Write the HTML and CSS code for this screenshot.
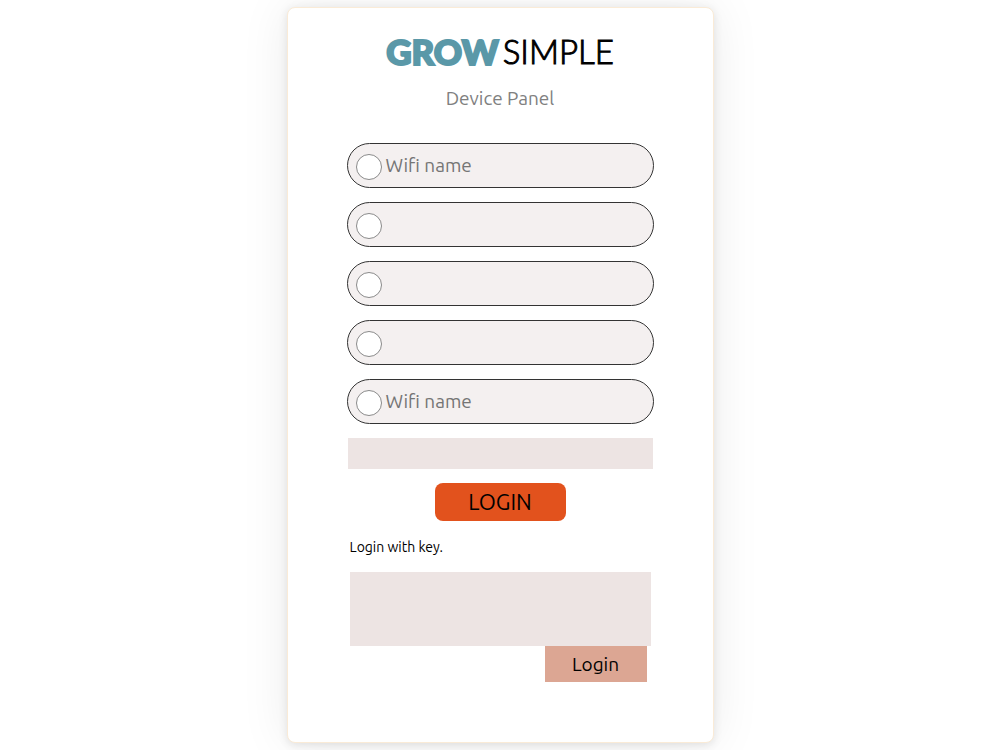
FILE: index.html
```html
<!DOCTYPE html>
<html lang="en">
<head>
    <meta charset="UTF-8">
    <meta name="viewport" content="width=device-width, initial-scale=1.0">
    <title>Grow Simple Device Panel</title>
    <link rel="stylesheet" href="styles.css">
</head>
<body>
    <main class="card">
        <h1 class="logo"><span class="logo-grow">GROW</span><span class="logo-simple">SIMPLE</span></h1>
        <p class="subtitle">Device Panel</p>

        <form class="wifi-form">
            <label class="wifi-row">
                <input type="radio" name="wifi" value="1">
                <span>Wifi name</span>
            </label>
            <label class="wifi-row">
                <input type="radio" name="wifi" value="2" aria-label="Wifi 2">
            </label>
            <label class="wifi-row">
                <input type="radio" name="wifi" value="3" aria-label="Wifi 3">
            </label>
            <label class="wifi-row">
                <input type="radio" name="wifi" value="4" aria-label="Wifi 4">
            </label>
            <label class="wifi-row">
                <input type="radio" name="wifi" value="5">
                <span>Wifi name</span>
            </label>
            <input class="password" type="password" name="password" aria-label="Password">
            <button class="login-btn" type="submit">LOGIN</button>
        </form>

        <form class="key-form">
            <label for="key">Login with key.</label>
            <textarea id="key" name="key"></textarea>
            <button class="key-btn" type="submit">Login</button>
        </form>
    </main>
</body>
</html>
```

FILE: styles.css
```css
* {
    box-sizing: border-box;
}
body {
    margin: 0;
    padding: 7px;
    background: white;
    font-family: Ubuntu, "Noto Sans", sans-serif;
    color: black;
}
.card {
    max-width: 427px;
    margin: 0 auto;
    padding: 23px 59px 60px;
    background: white;
    border: 1px solid antiquewhite;
    border-radius: 8px;
    box-shadow: 0 0 50px rgba(0,0,0,0.08), 0 2px 10px rgba(0,0,0,0.1);
}

/* Logo */
.logo {
    display: flex;
    justify-content: center;
    align-items: center;
    gap: 4px;
    margin: 0;
    font-family: Lato, sans-serif;
    line-height: 40px;
}
.logo-grow {
    color: #5a98a8;
    font-size: 35px;
    font-weight: 900;
    -webkit-text-stroke: 2px #5a98a8;
}
.logo-simple {
    font-size: 33px;
    font-weight: 300;
    -webkit-text-stroke: 1px black;
}
.subtitle {
    margin: 13px 0 31px;
    text-align: center;
    font-size: 19px;
    line-height: 28px;
    color: #808080;
}

/* Wifi list */
.wifi-form {
    display: flex;
    flex-direction: column;
    gap: 14px;
}
.wifi-row {
    display: flex;
    align-items: center;
    gap: 4px;
    height: 45px;
    padding: 3px 8px 0;
    background: #f4f0f0;
    border: 1px solid #333;
    border-radius: 24px;
    font-size: 19px;
    line-height: 28px;
    color: #757575;
}
.wifi-row input {
    appearance: none;
    width: 26px;
    height: 26px;
    margin: 0;
    background: white;
    border: 1px solid #8a8a8a;
    border-radius: 50%;
}
.wifi-row input:checked {
    background: #e2521d;
}
.wifi-row span {
    padding-bottom: 4px;
}
.password {
    height: 31px;
    margin: 0 1px;
    padding: 4px 8px;
    background: #ede4e3;
    border: none;
    font-size: 16px;
}
button {
    border: none;
    font-family: inherit;
    color: black;
    cursor: pointer;
}
.login-btn {
    align-self: center;
    width: 131px;
    height: 38px;
    padding: 0 0 2px;
    background: #e2521d;
    border-radius: 8px;
    font-size: 22px;
}

/* Login with key */
.key-form {
    display: flex;
    flex-direction: column;
    margin: 16px 3px 0;
}
.key-form label {
    font-size: 14px;
    line-height: 20px;
}
.key-form textarea {
    height: 74px;
    margin-top: 15px;
    padding: 8px;
    background: #ede4e3;
    border: none;
    resize: none;
    font-family: inherit;
    font-size: 14px;
}
.key-btn {
    align-self: flex-end;
    width: 102px;
    height: 36px;
    margin-right: 4px;
    padding: 0;
    background: #dca693;
    font-size: 19px;
}
```
